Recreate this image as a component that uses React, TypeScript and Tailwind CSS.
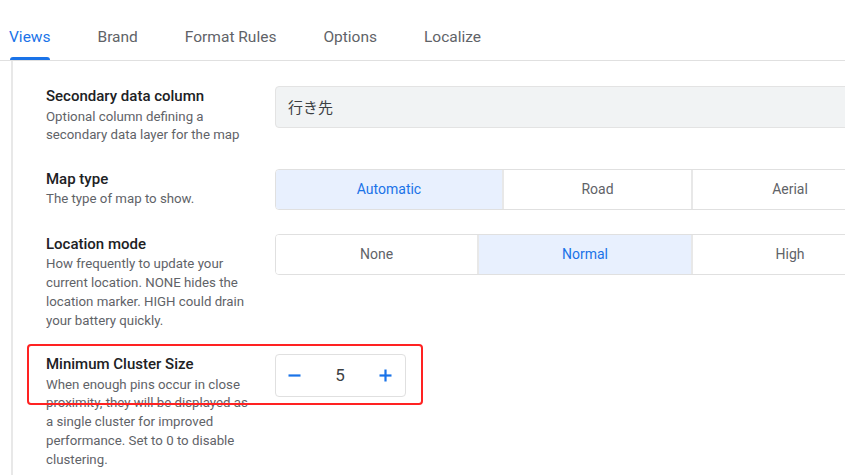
import React from "react";

const tabs = ["Views", "Brand", "Format Rules", "Options", "Localize"];

function Segmented({ items, widths, active }: { items: string[]; widths: string[]; active: number }) {
  return (
    <div className="flex h-[41px] w-[613px] shrink-0 rounded border border-[#e0e0e0] overflow-hidden">
      {items.map((it, i) => (
        <div
          key={it}
          className={
            (i === active ? "bg-[#e8f0fe] text-[#1a73e8] " : "bg-white text-[#5f6368] ") +
            (i > 0 ? "border-l-2 border-[#e8e8e8] " : "") +
            widths[i] +
            " flex items-center justify-center text-[14px]"
          }
        >
          {it}
        </div>
      ))}
    </div>
  );
}

function Row({ title, desc, children }: { title: string; desc: string; children: React.ReactNode }) {
  return (
    <div className="flex items-start">
      <div className="w-[207px] shrink-0 mr-[22px]">
        <div className="text-[15px] leading-[20px] font-medium text-[#202124]">{title}</div>
        <div className="mt-[1.5px] text-[13.25px] leading-[18.7px] text-[#5f6368]">{desc}</div>
      </div>
      {children}
    </div>
  );
}

export default function App() {
  return (
    <div className="w-[845px] h-[475px] overflow-hidden bg-white font-['Roboto',sans-serif] relative">
      <div className="flex gap-[47px] pl-[9px] h-[61px] border-b border-[#e0e0e0] items-end">
        {tabs.map((t, i) => (
          <div key={t} className="relative h-full flex items-center pt-[15px]">
            <span className={"text-[15.5px] whitespace-nowrap " + (i === 0 ? "text-[#1a73e8]" : "text-[#5f6368]")}>{t}</span>
            {i === 0 && (
              <div className="absolute bottom-0 left-[1px] right-[1px] h-[3px] rounded-t bg-[#1a73e8]" />
            )}
          </div>
        ))}
      </div>
      <div className="ml-[11px] border-l-2 border-[#e8e8e8] h-[414px]">
        <div className="pl-[33px] pt-[25px] flex flex-col gap-[24px]">
          <Row title="Secondary data column" desc="Optional column defining a secondary data layer for the map">
            <div className="w-[613px] h-[42px] shrink-0 rounded bg-[#f1f3f4] border border-[#e3e3e3] flex items-center pl-[12px] text-[15px] text-[#3c4043] font-['Noto_Sans_CJK_JP',sans-serif]">
              行き先
            </div>
          </Row>
          <Row title="Map type" desc="The type of map to show.">
            <Segmented items={["Automatic", "Road", "Aerial"]} widths={["w-[226px]", "w-[189px]", "flex-1"]} active={0} />
          </Row>
          <Row
            title="Location mode"
            desc="How frequently to update your current location. NONE hides the location marker. HIGH could drain your battery quickly."
          >
            <Segmented items={["None", "Normal", "High"]} widths={["w-[201px]", "w-[214px]", "flex-1"]} active={1} />
          </Row>
          <Row
            title="Minimum Cluster Size"
            desc="When enough pins occur in close proximity, they will be displayed as a single cluster for improved performance. Set to 0 to disable clustering."
          >
            <div className="w-[131px] h-[43px] shrink-0 rounded border border-[#e0e0e0] flex items-center justify-between pl-[12px] pr-[13px]">
              <svg width="13" height="13" viewBox="0 0 13 13">
                <rect x="0.5" y="5.4" width="12" height="2.2" fill="#1a73e8" />
              </svg>
              <span className="text-[17px] text-[#3c4043]">5</span>
              <svg width="13" height="13" viewBox="0 0 13 13">
                <rect x="0.5" y="5.4" width="12" height="2.2" fill="#1a73e8" />
                <rect x="5.4" y="0.5" width="2.2" height="12" fill="#1a73e8" />
              </svg>
            </div>
          </Row>
        </div>
      </div>
      <div className="absolute left-[27px] top-[344px] w-[396px] h-[61px] border-2 border-[#f22] rounded-[4px] pointer-events-none" />
    </div>
  );
}
